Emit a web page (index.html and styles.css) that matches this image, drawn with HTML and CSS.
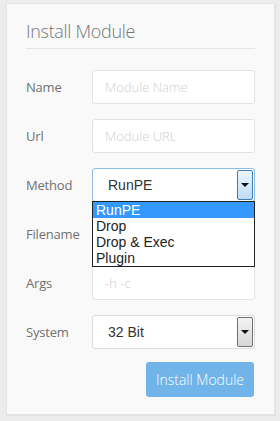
FILE: index.html
```html
<!DOCTYPE html>
<html>
<head>
<meta charset="utf-8">
<link rel="stylesheet" href="styles.css">
</head>
<body>
<div class="card">
  <h2 class="title">Install Module</h2>
  <div class="sep"></div>
  <form class="form">
    <div class="row">
      <label class="lbl">Name</label>
      <div class="input"><span class="ph">Module Name</span></div>
    </div>
    <div class="row">
      <label class="lbl">Url</label>
      <div class="input"><span class="ph">Module URL</span></div>
    </div>
    <div class="row">
      <label class="lbl">Method</label>
      <div class="select focused">
        <span class="val">RunPE</span>
        <span class="arrow blue"><span class="tri"></span></span>
        <ul class="menu">
          <li class="sel">RunPE</li>
          <li>Drop</li>
          <li>Drop &amp; Exec</li>
          <li>Plugin</li>
        </ul>
      </div>
    </div>
    <div class="row">
      <label class="lbl">Filename</label>
      <div class="input"><span class="ph"></span></div>
    </div>
    <div class="row">
      <label class="lbl">Args</label>
      <div class="input"><span class="ph">-h -c</span></div>
    </div>
    <div class="row">
      <label class="lbl">System</label>
      <div class="select">
        <span class="val">32 Bit</span>
        <span class="arrow grey"><span class="tri"></span></span>
      </div>
    </div>
    <div class="actions">
      <button type="button" class="btn">Install Module</button>
    </div>
  </form>
</div>
</body>
</html>
```
FILE: styles.css
```css
html, body {
  margin: 0;
  padding: 0;
}
body {
  background: #ececec;
  width: 280px;
  height: 421px;
  overflow: hidden;
  font-family: "Open Sans", "Liberation Sans", sans-serif;
}
.card {
  margin: 3px 5px 0 6px;
  height: 412px;
  box-sizing: border-box;
  background: #f9f9f9;
  border: 1px solid #e4e4e4;
  box-shadow: 1px 1px 1px rgba(0,0,0,0.04);
  padding: 14px 19px 0 19px;
}
.title {
  margin: 0;
  font-size: 18px;
  font-weight: 300;
  color: #777;
  line-height: 26px;
  letter-spacing: -0.3px;
}
.sep {
  height: 1px;
  background: #e6e6e6;
  margin-top: 4px;
  margin-bottom: 21px;
}
.form {
  display: flex;
  flex-direction: column;
  gap: 15px;
}
.row {
  display: grid;
  grid-template-columns: 66px 163px;
  align-items: center;
}
.lbl {
  font-size: 13px;
  color: #707070;
  font-weight: 400;
  letter-spacing: -0.2px;
}
.input {
  height: 34px;
  box-sizing: border-box;
  background: #fff;
  border: 1px solid #e2e2e2;
  border-radius: 3px;
  display: flex;
  align-items: center;
  padding-left: 12px;
}
.ph {
  font-size: 13px;
  font-weight: 300;
  color: #cfcfcf;
}
.select {
  position: relative;
  height: 34px;
  box-sizing: border-box;
  background: #fff;
  border: 1px solid #dcdcdc;
  border-radius: 3px;
  display: flex;
  align-items: center;
  padding-left: 15px;
}
.select.focused {
  border-color: #8fbde6;
}
.val {
  font-family: "Liberation Sans", Arial, sans-serif;
  font-size: 14px;
  color: #333;
  flex: 1;
}
.arrow {
  width: 16px;
  height: 30px;
  box-sizing: border-box;
  margin-right: 1px;
  display: flex;
  align-items: center;
  justify-content: center;
  border-radius: 2px;
}
.arrow.blue {
  background: linear-gradient(#eef6fd, #bcdcf5);
  border: 1px solid #3c7fb1;
}
.arrow.grey {
  background: linear-gradient(#f4f4f4, #d6d6d6);
  border: 1px solid #707070;
}
.tri {
  width: 0;
  height: 0;
  border-left: 4px solid transparent;
  border-right: 4px solid transparent;
  border-top: 4px solid #111;
}
.menu {
  position: absolute;
  left: -1px;
  top: 32px;
  width: 163px;
  box-sizing: border-box;
  margin: 0;
  padding: 0;
  list-style: none;
  background: #fff;
  border: 1px solid #222;
  z-index: 2;
}
.menu li {
  font-family: "Liberation Sans", Arial, sans-serif;
  font-size: 14px;
  line-height: 16px;
  height: 16px;
  padding-left: 3px;
  color: #222;
}
.menu li.sel {
  background: #3399ff;
  color: #fff;
}
.actions {
  display: flex;
  justify-content: flex-end;
  margin-top: -2px;
}
.btn {
  width: 108px;
  height: 35px;
  margin-right: 1px;
  border: none;
  border-radius: 3px;
  background: #70b4ea;
  color: #fff;
  font-family: "Open Sans", "Liberation Sans", sans-serif;
  font-size: 14px;
  font-weight: 300;
  padding: 0;
}
```
